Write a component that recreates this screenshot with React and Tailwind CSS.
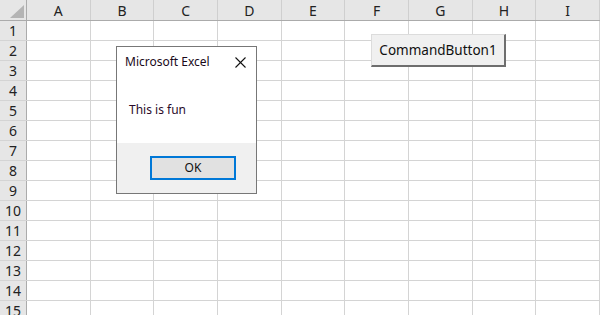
import React from "react";

const cols = ["A", "B", "C", "D", "E", "F", "G", "H", "I"];
const rows = Array.from({ length: 15 }, (_, i) => i + 1);

export default function App() {
  return (
    <div
      className="relative w-[600px] h-[315px] overflow-hidden bg-white"
      style={{ fontFamily: '"Noto Sans", "Open Sans", sans-serif' }}
    >
      <div className="grid grid-cols-[27px_repeat(9,1fr)] h-[21px] bg-[#e6e6e6] border-b border-[#ababab]">
        <div className="relative border-r border-[#ababab]">
          <svg className="absolute left-[10px] top-[5px]" width="14" height="13" viewBox="0 0 14 13">
            <polygon points="14,0 14,13 0,13" fill="#b4b4b4" />
          </svg>
        </div>
        {cols.map((c) => (
          <div
            key={c}
            className="flex items-center justify-center border-r border-[#cfcfcf] text-[14px] text-[#222] leading-none pt-[1px]"
          >
            {c}
          </div>
        ))}
      </div>
      {rows.map((r) => (
        <div key={r} className="grid grid-cols-[27px_repeat(9,1fr)] h-[20px] border-b border-[#d4d4d4]">
          <div className="flex items-center justify-center bg-[#e6e6e6] border-r border-[#ababab] text-[14px] text-[#222] leading-none">
            {r}
          </div>
          {cols.map((c) => (
            <div key={c} className="border-r border-[#d4d4d4]" />
          ))}
        </div>
      ))}

      {/* Command button */}
      <div className="absolute left-[371px] top-[34px] w-[135px] h-[33px] bg-[#f0f0f0] border-t border-l border-[#dcdcdc] border-r-2 border-b-2 border-r-[#6e6e6e] border-b-[#6e6e6e] flex items-center justify-center text-[13.5px] text-[#111]">
        CommandButton1
      </div>

      {/* Message box */}
      <div className="absolute left-[116px] top-[46px] w-[141px] h-[148px] bg-white border border-[#777] flex flex-col">
        <div className="flex items-center justify-between h-[30px] pl-[8px] pr-[10px] text-[12px] text-[#1a0a1a]">
          <span>Microsoft Excel</span>
          <svg width="11" height="11" viewBox="0 0 11 11" stroke="#111" strokeWidth="1.1">
            <line x1="0.5" y1="0.5" x2="10.5" y2="10.5" />
            <line x1="10.5" y1="0.5" x2="0.5" y2="10.5" />
          </svg>
        </div>
        <div className="flex-1 pl-[12px] pt-[24px] text-[12px] text-[#2a0a2a]">This is fun</div>
        <div className="h-[50px] bg-[#f0f0f0] flex items-start justify-end pr-[20px] pt-[13px]">
          <div className="w-[86px] h-[24px] bg-[#e1e1e1] border-2 border-[#0078d7] flex items-center justify-center text-[12px] text-[#111]">
            OK
          </div>
        </div>
      </div>
    </div>
  );
}
